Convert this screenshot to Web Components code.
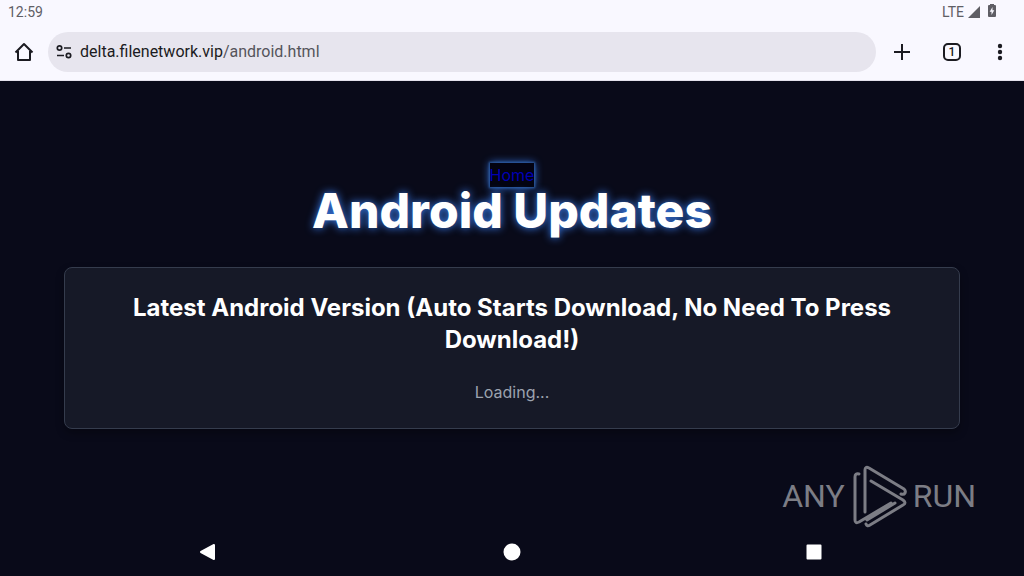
<!DOCTYPE html>
<html lang="en">
<head>
<meta charset="utf-8">
<meta name="viewport" content="width=device-width, initial-scale=1">
<title>Android Updates</title>
<style>
	body {
		margin: 0;
		background: #090a19;
	}
</style>
</head>
<body>
<phone-screen>
	<status-bar slot="top" time="12:59" network="LTE"></status-bar>
	<browser-bar slot="top" host="delta.filenetwork.vip" path="/android.html" tabs="1"></browser-bar>
	<updates-page>
		<glow-link slot="nav" href="#home">Home</glow-link>
		<span slot="title">Android Updates</span>
		<version-card>
			<span slot="title">Latest Android Version (Auto Starts Download, No Need To Press Download!)</span>
			Loading...
		</version-card>
	</updates-page>
	<run-watermark slot="overlay"></run-watermark>
	<system-nav slot="bottom"></system-nav>
</phone-screen>

<script>
class BaseElement extends HTMLElement {
	constructor() {
		super();
		this.attachShadow({ mode: 'open' });
	}

	connectedCallback() {
		this.shadowRoot.innerHTML = this.render();
	}

	attr(name) {
		return this.getAttribute(name) || '';
	}
}

class PhoneScreen extends BaseElement {
	render() {
		return `
			<style>
				:host {
					display: flex;
					flex-direction: column;
					min-height: 100vh;
					position: relative;
				}

				main {
					flex: 1;
				}
			</style>
			<slot name="top"></slot>
			<main><slot></slot></main>
			<slot name="bottom"></slot>
			<slot name="overlay"></slot>
		`;
	}
}

class StatusBar extends BaseElement {
	render() {
		return `
			<style>
				:host {
					display: flex;
					justify-content: space-between;
					align-items: center;
					height: 24px;
					padding: 0 24px 0 8px;
					background: #f9f8ff;
					color: #5f5e65;
					font: 14px/24px Roboto, sans-serif;
				}

				div {
					display: flex;
					align-items: center;
					gap: 4px;
				}

				svg {
					display: block;
					fill: currentColor;
				}
			</style>
			<span>${this.attr('time')}</span>
			<div>
				<span>${this.attr('network')}</span>
				<svg width="12" height="14" viewBox="0 0 12 14"><path d="M12 1v12H0z"/></svg>
				<svg width="16" height="16" viewBox="0 0 16 16">
					<path fill-rule="evenodd" d="M6 0h4v1h1q1 0 1 1v10q0 1-1 1H5q-1 0-1-1V2q0-1 1-1h1zM8.500 3L5.700 7.700h1.800V11l2.800-4.700H8.500z"/>
				</svg>
			</div>
		`;
	}
}

class BrowserBar extends BaseElement {
	render() {
		return `
			<style>
				:host {
					display: flex;
					align-items: center;
					height: 56px;
					border-bottom: 1px solid #e4e2ec;
					background: #f9f8ff;
					color: #1b1b21;
					font-family: Roboto, sans-serif;
				}

				button {
					display: flex;
					justify-content: center;
					align-items: center;
					width: 48px;
					height: 48px;
					padding: 0;
					border: 0;
					background: none;
					color: inherit;
				}

				button.add {
					width: 52px;
				}

				svg {
					display: block;
					fill: none;
					stroke: currentColor;
					stroke-width: 2;
				}

				.address {
					flex: 1;
					display: flex;
					align-items: center;
					gap: 8px;
					height: 40px;
					padding: 0 8px;
					border-radius: 20px;
					background: #e7e5ee;
					font-size: 16px;
					line-height: 24px;
				}

				.address button {
					width: 16px;
					height: 24px;
				}

				.address svg {
					stroke-width: 1.7;
				}

				.path {
					color: #55545b;
				}

				.tabs {
					width: 14px;
					height: 14px;
					border: 2px solid;
					border-radius: 5px;
					font: 500 12px/14px Roboto, sans-serif;
					text-align: center;
				}
			</style>
			<button aria-label="Home page">
				<svg width="24" height="24" viewBox="0 0 24 24"><path stroke-linejoin="round" d="M3.500 12.500L12 4l8.500 8.500M6 11v9h12v-9"/></svg>
			</button>
			<div class="address">
				<button aria-label="Site information">
					<svg width="16" height="16" viewBox="0 0 16 16">
						<circle cx="3.500" cy="4" r="2.200"/>
						<path d="M8 4h7M1 11.500h7"/>
						<circle cx="12.500" cy="11.500" r="2.200"/>
					</svg>
				</button>
				<span>${this.attr('host')}<span class="path">${this.attr('path')}</span></span>
			</div>
			<button class="add" aria-label="New tab">
				<svg width="18" height="18" viewBox="0 0 18 18"><path d="M9 1v16M1 9h16"/></svg>
			</button>
			<button aria-label="Open tabs"><span class="tabs">${this.attr('tabs')}</span></button>
			<button aria-label="Menu">
				<svg width="6" height="18" viewBox="0 0 6 18" style="fill: currentColor; stroke: none">
					<circle cx="3" cy="3" r="2.200"/><circle cx="3" cy="9" r="2.200"/><circle cx="3" cy="15" r="2.200"/>
				</svg>
			</button>
		`;
	}
}

class UpdatesPage extends BaseElement {
	render() {
		return `
			<style>
				:host {
					display: block;
					padding: 82px 64px 32px;
					color: #fff;
					font: 16px/24px Inter, sans-serif;
					text-align: center;
				}

				h1 {
					margin: 0 0 32px;
					font-size: 48px;
					line-height: 48px;
					font-weight: 800;
					text-shadow: 0 0 8px #3b82f6;
				}
			</style>
			<slot name="nav"></slot>
			<h1><slot name="title"></slot></h1>
			<slot></slot>
		`;
	}
}

class GlowLink extends BaseElement {
	render() {
		return `
			<style>
				:host {
					display: block;
				}

				a {
					display: inline-block;
					color: #0000b4;
					background: #030311;
					text-decoration: none;
					box-shadow: 0 0 2px 1px #2c5a9e, 0 0 8px #3b82f6;
				}
			</style>
			<a href="${this.attr('href')}"><slot></slot></a>
		`;
	}
}

class VersionCard extends BaseElement {
	render() {
		return `
			<style>
				:host {
					display: block;
					padding: 24px;
					border: 1px solid #353c4d;
					border-radius: 8px;
					background: #161927;
					color: #9ca3af;
					box-shadow: 0 4px 8px rgba(0, 0, 0, .3);
				}

				h2 {
					margin: 0 0 24px;
					color: #fff;
					font-size: 24px;
					line-height: 32px;
					font-weight: 700;
				}
			</style>
			<h2><slot name="title"></slot></h2>
			<slot></slot>
		`;
	}
}

class RunWatermark extends BaseElement {
	render() {
		return `
			<style>
				:host {
					display: flex;
					align-items: center;
					gap: 6px;
					position: absolute;
					right: 48px;
					bottom: 48px;
					color: #7c7d85;
					font: 32px/64px Roboto, sans-serif;
					pointer-events: none;
				}

				svg {
					display: block;
					fill: none;
					stroke: currentColor;
					stroke-width: 3;
					stroke-linejoin: round;
					stroke-linecap: round;
				}
			</style>
			<span>ANY</span>
			<svg width="56" height="64" viewBox="0 0 56 64">
				<path d="M14 48V6q0-4 4-2L53 25q2 2 1 4t-4 1"/>
				<path d="M20 17L52 36q4 3 0 5L19 61q-3 2-4-1"/>
				<path d="M8 10q-4-1-4 3v43q0 4 4 2L40 39M16 56L44 39"/>
			</svg>
			<span>RUN</span>
		`;
	}
}

class SystemNav extends BaseElement {
	render() {
		return `
			<style>
				:host {
					display: grid;
					grid-template-columns: repeat(3, 302px);
					justify-content: center;
					height: 48px;
				}

				button {
					display: flex;
					justify-content: center;
					align-items: center;
					padding: 0;
					border: 0;
					background: none;
					color: #fff;
				}

				svg {
					display: block;
					fill: currentColor;
					stroke: currentColor;
					stroke-width: 2;
					stroke-linejoin: round;
				}
			</style>
			<button aria-label="Back"><svg width="20" height="18" viewBox="0 0 20 18"><path d="M1 9L14 2v14z"/></svg></button>
			<button aria-label="Home screen"><svg width="18" height="18" viewBox="0 0 18 18"><circle cx="9" cy="9" r="7.500"/></svg></button>
			<button aria-label="Recent apps"><svg width="18" height="18" viewBox="0 0 18 18"><path d="M2.500 2.500h13v13h-13z"/></svg></button>
		`;
	}
}

customElements.define('phone-screen', PhoneScreen);
customElements.define('status-bar', StatusBar);
customElements.define('browser-bar', BrowserBar);
customElements.define('updates-page', UpdatesPage);
customElements.define('glow-link', GlowLink);
customElements.define('version-card', VersionCard);
customElements.define('run-watermark', RunWatermark);
customElements.define('system-nav', SystemNav);
</script>
</body>
</html>
